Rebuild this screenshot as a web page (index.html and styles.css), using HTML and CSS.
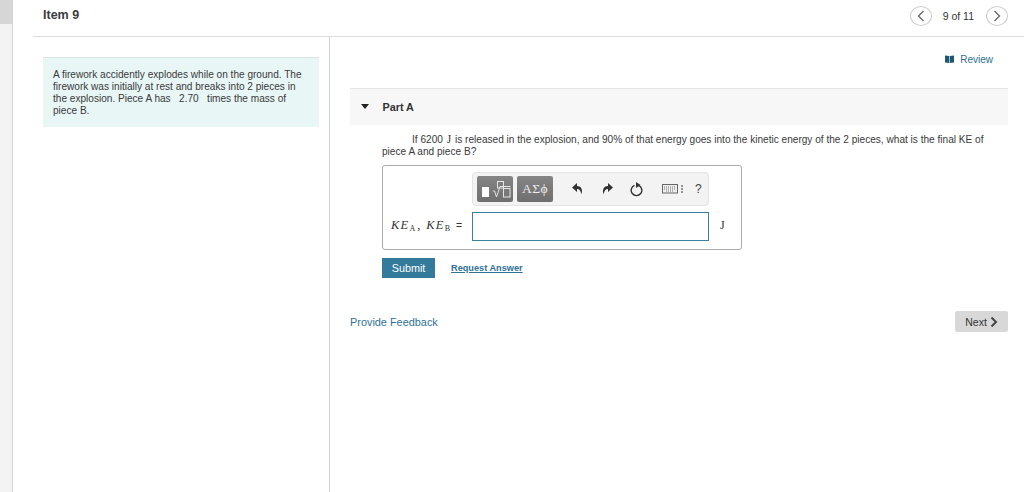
FILE: index.html
```html
<!DOCTYPE html>
<html lang="en">
<head>
<meta charset="utf-8">
<title>Item 9</title>
<link rel="stylesheet" href="styles.css">
</head>
<body>
<div class="page">
  <aside class="rail"><div class="rail-top"></div></aside>
  <main class="main">
    <header class="header">
      <h1 class="item-title">Item 9</h1>
      <nav class="pager">
        <span class="circle"><svg width="8" height="12" viewBox="0 0 8 12"><path d="M6.500 1 1.500 6l5 5" fill="none" stroke="#666" stroke-width="1.300"/></svg></span>
        <span class="count">9 of 11</span>
        <span class="circle"><svg width="8" height="12" viewBox="0 0 8 12"><path d="M1.500 1l5 5-5 5" fill="none" stroke="#666" stroke-width="1.300"/></svg></span>
      </nav>
    </header>
    <div class="columns">
      <section class="left">
        <div class="intro">A firework accidently explodes while on the ground. The firework was initially at rest and breaks into 2 pieces in the explosion. Piece A has &nbsp; 2.70 &nbsp; times the mass of piece B.</div>
      </section>
      <section class="right">
        <div class="review-row">
          <a class="review"><svg width="9" height="8" viewBox="0 0 9 8"><path d="M0 .5 4.200 1v7L0 7.500zM9 .5 4.800 1v7L9 7.500z" fill="#1f5673"/></svg>Review</a>
        </div>
        <div class="part-bar"><span class="caret"></span><span class="part-title">Part A</span></div>
        <div class="part-body">
          <p class="question"><span class="indent"></span>If 6200 <span class="math-up">J</span> is released in the explosion, and 90% of that energy goes into the kinetic energy of the 2 pieces, what is the final KE of piece A and piece B?</p>
          <div class="answer-box">
            <div class="toolbar-row">
              <div class="toolbar">
                <span class="tool-btn">
                  <svg width="36" height="26" viewBox="0 0 36 26"><rect x="5" y="11" width="7" height="10" fill="#fff"/><rect x="20.500" y="5.500" width="6" height="6.500" fill="none" stroke="#e4e4e4"/><path d="M16 15h1.500l2 6 3.500-10.500h10.500" fill="none" stroke="#e4e4e4"/><rect x="26.500" y="12.500" width="6.500" height="8.500" fill="none" stroke="#e4e4e4"/></svg>
                </span>
                <span class="tool-btn tool-greek">ΑΣϕ</span>
                <span class="icons">
                  <svg class="ic-undo" width="11" height="12" viewBox="0 0 11 12"><path d="M5 0 0 4.500 5 9V6c2.500 0 3.500 1.500 4.500 5.500C11 6 9 3 5 3z" fill="#333"/></svg>
                  <svg class="ic-redo" width="11" height="12" viewBox="0 0 11 12"><path d="M6 0l5 4.500L6 9V6c-2.500 0-3.500 1.500-4.500 5.500C0 6 2 3 6 3z" fill="#333"/></svg>
                  <svg class="ic-reset" width="13" height="15" viewBox="0 0 13 15"><path d="M8.500 3.400a5.300 5.300 0 1 1-4 0" fill="none" stroke="#333" stroke-width="1.400"/><path d="M6 0l4.500 3L6 6z" fill="#333"/></svg>
                  <svg class="ic-keys" width="22" height="10" viewBox="0 0 22 10"><rect x=".5" y=".5" width="15" height="8.500" fill="#eee" stroke="#666"/><path d="M2 3h12M2 5h12M4 7h8" stroke="#777" stroke-dasharray="1 1"/><path d="M20 1v2M20 4v2M20 7v2" stroke="#777" stroke-width="1.500"/></svg>
                  <span class="help">?</span>
                </span>
              </div>
            </div>
            <div class="input-row">
              <span class="label"><i>KE</i><sub>A</sub><span class="comma">,</span><i>KE</i><sub>B</sub><span class="eq">=</span></span>
              <span class="input"></span>
              <span class="unit">J</span>
            </div>
          </div>
          <div class="actions">
            <span class="submit">Submit</span>
            <a class="request">Request Answer</a>
          </div>
        </div>
        <div class="footer-row">
          <a class="feedback">Provide Feedback</a>
          <span class="next">Next<svg width="8" height="10" viewBox="0 0 8 10"><path d="M1.500 .5 6 5l-4.500 4.500" fill="none" stroke="#444" stroke-width="2"/></svg></span>
        </div>
      </section>
    </div>
  </main>
</div>
</body>
</html>
```

FILE: styles.css
```css
* { box-sizing: border-box; }
html, body { margin: 0; height: 100%; }
body {
  background: #fff;
  color: #333;
  font-family: "Liberation Sans", Arial, sans-serif;
  overflow: hidden;
}
.page { display: flex; height: 492px; }
.rail {
  width: 13px;
  flex: none;
  background: #f3f3f3;
  border-right: 1px solid #d4d4d4;
}
.rail-top { height: 24px; background: #d6d6d6; }
.main {
  flex: 1;
  min-width: 0;
  margin-left: 20px;
  display: flex;
  flex-direction: column;
}
.header {
  height: 37px;
  flex: none;
  display: flex;
  align-items: flex-start;
  justify-content: space-between;
  border-bottom: 1px solid #dcdcdc;
  padding: 6px 16px 0 10px;
}
.item-title {
  margin: 0;
  font-size: 12.500px;
  line-height: 19px;
  font-weight: 700;
  color: #3c3c3c;
}
.pager { display: flex; align-items: center; font-size: 10.500px; color: #333; }
.circle {
  width: 22px;
  height: 20px;
  border: 1px solid #cfcfcf;
  border-radius: 50%;
  display: flex;
  align-items: center;
  justify-content: center;
}
.count { margin: 0 12px 0 11px; }
.columns { flex: 1; display: flex; min-height: 0; }
.left {
  width: 297px;
  flex: none;
  border-right: 1px solid #cfd3d6;
  padding: 20px 10px 0 10px;
}
.intro {
  width: 276px;
  height: 70px;
  background: #e8f6f6;
  border-top: 1px solid #d9e4e4;
  padding: 11px 10px 0 10px;
  font-size: 10.080px;
  line-height: 12px;
  color: #3a3a3a;
}
.right {
  flex: 1;
  min-width: 0;
  padding: 0 16px 0 20px;
}
.review-row {
  display: flex;
  justify-content: flex-end;
  height: 51px;
  padding-top: 15px;
}
.review {
  display: flex;
  align-items: center;
  gap: 6px;
  height: 14px;
  padding-right: 15px;
  font-size: 10px;
  color: #2f6f8f;
}
.part-bar {
  height: 37px;
  background: #f7f7f7;
  border-top: 1px solid #e4e4e4;
  display: flex;
  align-items: center;
  padding-left: 11px;
}
.caret {
  width: 0;
  height: 0;
  border-left: 4.500px solid transparent;
  border-right: 4.500px solid transparent;
  border-top: 5px solid #222;
  margin-right: 13.500px;
  margin-top: -2px;
}
.part-title { font-size: 10.800px; font-weight: 700; color: #333; }
.part-body { padding: 9px 20px 0 32px; }
.question {
  margin: 0;
  font-size: 10.100px;
  line-height: 12px;
  color: #3a3a3a;
}
.indent { display: inline-block; width: 30px; }
.math-up { font-family: "Liberation Serif", serif; font-size: 11.500px; line-height: 0; padding: 0 1px; }
.answer-box {
  width: 360px;
  height: 85px;
  margin-top: 7px;
  border: 1px solid #aaa;
  border-radius: 3px;
  padding: 6px 10px 0 8px;
}
.toolbar-row { display: flex; padding-left: 81px; }
.toolbar {
  width: 237px;
  height: 34px;
  flex: none;
  display: flex;
  align-items: center;
  background: #f3f3f3;
  border: 1px solid #e4e4e4;
  border-radius: 4px;
  padding: 0 4px;
  gap: 4px;
}
.tool-btn {
  height: 26px;
  width: 36px;
  background: linear-gradient(#858585, #6f6f6f);
  border-radius: 2px;
  color: #eee;
  display: flex;
  align-items: center;
  justify-content: center;
  font-family: "Liberation Serif", serif;
  font-size: 13.500px;
}
.tool-greek { letter-spacing: .5px; }
.icons { display: flex; align-items: center; margin-left: 15px; }
.ic-redo { margin-left: 19px; }
.ic-reset { margin-left: 17px; }
.ic-keys { margin-left: 19px; }
.help { margin-left: 11px; font-size: 12px; color: #444; }
.input-row { display: flex; align-items: center; margin-top: 6px; height: 29px; }
.label {
  width: 81px;
  flex: none;
  font-family: "Liberation Serif", serif;
  font-size: 12.500px;
  color: #333;
  white-space: nowrap;
  display: flex;
  align-items: baseline;
  padding-bottom: 2px;
}
.label i { letter-spacing: 1.200px; }
.label sub { font-size: 8px; line-height: 0; position: relative; top: 2px; vertical-align: baseline; }
.comma { margin: 0 6px 0 2px; }
.eq { font-family: "Liberation Sans", sans-serif; font-size: 10.500px; margin-left: 6px; }
.input {
  width: 237px;
  height: 29px;
  flex: none;
  border: 1px solid #3c7f9f;
}
.unit {
  margin-left: 11px;
  padding-bottom: 2px;
  font-family: "Liberation Serif", serif;
  font-size: 12px;
}
.actions { display: flex; align-items: center; margin-top: 8px; }
.submit {
  width: 53px;
  height: 20px;
  background: #337a9c;
  color: #fff;
  font-size: 10.800px;
  display: flex;
  align-items: center;
  justify-content: center;
}
.request {
  margin-left: 16px;
  font-size: 9.200px;
  font-weight: 700;
  color: #2f7397;
  text-decoration: underline;
}
.footer-row {
  display: flex;
  justify-content: space-between;
  align-items: center;
  margin-top: 33px;
}
.feedback { font-size: 10.900px; color: #2f7397; }
.next {
  width: 53px;
  height: 21px;
  background: #d8d8d8;
  border-radius: 2px;
  display: flex;
  align-items: center;
  justify-content: center;
  gap: 3px;
  font-size: 10.500px;
  color: #333;
}
```
